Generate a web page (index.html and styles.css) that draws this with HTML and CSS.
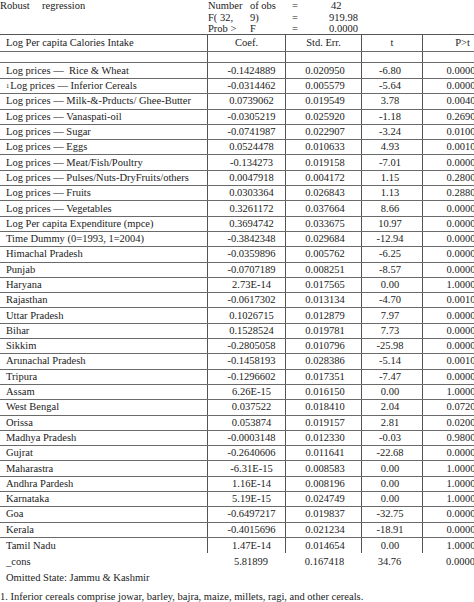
FILE: index.html
```html
<!DOCTYPE html>
<html>
<head>
<meta charset="utf-8">
<link rel="stylesheet" href="styles.css">
</head>
<body>
<div class="page">
  <div class="info">
    <span class="i1">Robust</span><span class="i2">regression</span><span class="i3">Number</span><span class="i4">of obs</span><span class="i5">=</span><span class="i6 n42">42</span>
    <span class="i1"></span><span class="i2"></span><span class="i3">F( 32,</span><span class="i4">9)</span><span class="i5">=</span><span class="i6">919.98</span>
    <span class="i1"></span><span class="i2"></span><span class="i3">Prob &gt;</span><span class="i4">F</span><span class="i5">=</span><span class="i6">0.0000</span>
  </div>
  <div class="table">
    <div class="row head"><div class="c lab">Log Per capita Calories Intake</div><div class="c coef">Coef.</div><div class="c se">Std. Err.</div><div class="c t">t</div><div class="c p">P&gt;t</div></div>
    <div class="row empty"><div class="c lab"></div><div class="c coef"></div><div class="c se"></div><div class="c t"></div><div class="c p"></div></div>
    <div class="row first"><div class="c lab">Log prices —&nbsp; Rice &amp; Wheat</div><div class="c coef">-0.1424889</div><div class="c se">0.020950</div><div class="c t">-6.80</div><div class="c p">0.0000</div></div>
    <div class="row"><div class="c lab"><sup class="fn">1</sup>Log prices — Inferior Cereals</div><div class="c coef">-0.0314462</div><div class="c se">0.005579</div><div class="c t">-5.64</div><div class="c p">0.0000</div></div>
    <div class="row"><div class="c lab">Log prices — Milk-&amp;-Prducts/ Ghee-Butter</div><div class="c coef">0.0739062</div><div class="c se">0.019549</div><div class="c t">3.78</div><div class="c p">0.0040</div></div>
    <div class="row"><div class="c lab">Log prices — Vanaspati-oil</div><div class="c coef">-0.0305219</div><div class="c se">0.025920</div><div class="c t">-1.18</div><div class="c p">0.2690</div></div>
    <div class="row"><div class="c lab">Log prices — Sugar</div><div class="c coef">-0.0741987</div><div class="c se">0.022907</div><div class="c t">-3.24</div><div class="c p">0.0100</div></div>
    <div class="row"><div class="c lab">Log prices — Eggs</div><div class="c coef">0.0524478</div><div class="c se">0.010633</div><div class="c t">4.93</div><div class="c p">0.0010</div></div>
    <div class="row"><div class="c lab">Log prices — Meat/Fish/Poultry</div><div class="c coef">-0.134273</div><div class="c se">0.019158</div><div class="c t">-7.01</div><div class="c p">0.0000</div></div>
    <div class="row"><div class="c lab">Log prices — Pulses/Nuts-DryFruits/others</div><div class="c coef">0.0047918</div><div class="c se">0.004172</div><div class="c t">1.15</div><div class="c p">0.2800</div></div>
    <div class="row"><div class="c lab">Log prices — Fruits</div><div class="c coef">0.0303364</div><div class="c se">0.026843</div><div class="c t">1.13</div><div class="c p">0.2880</div></div>
    <div class="row"><div class="c lab">Log prices — Vegetables</div><div class="c coef">0.3261172</div><div class="c se">0.037664</div><div class="c t">8.66</div><div class="c p">0.0000</div></div>
    <div class="row"><div class="c lab">Log Per capita Expenditure (mpce)</div><div class="c coef">0.3694742</div><div class="c se">0.033675</div><div class="c t">10.97</div><div class="c p">0.0000</div></div>
    <div class="row"><div class="c lab">Time Dummy (0=1993, 1=2004)</div><div class="c coef">-0.3842348</div><div class="c se">0.029684</div><div class="c t">-12.94</div><div class="c p">0.0000</div></div>
    <div class="row"><div class="c lab">Himachal Pradesh</div><div class="c coef">-0.0359896</div><div class="c se">0.005762</div><div class="c t">-6.25</div><div class="c p">0.0000</div></div>
    <div class="row"><div class="c lab">Punjab</div><div class="c coef">-0.0707189</div><div class="c se">0.008251</div><div class="c t">-8.57</div><div class="c p">0.0000</div></div>
    <div class="row"><div class="c lab">Haryana</div><div class="c coef">2.73E-14</div><div class="c se">0.017565</div><div class="c t">0.00</div><div class="c p">1.0000</div></div>
    <div class="row"><div class="c lab">Rajasthan</div><div class="c coef">-0.0617302</div><div class="c se">0.013134</div><div class="c t">-4.70</div><div class="c p">0.0010</div></div>
    <div class="row"><div class="c lab">Uttar Pradesh</div><div class="c coef">0.1026715</div><div class="c se">0.012879</div><div class="c t">7.97</div><div class="c p">0.0000</div></div>
    <div class="row"><div class="c lab">Bihar</div><div class="c coef">0.1528524</div><div class="c se">0.019781</div><div class="c t">7.73</div><div class="c p">0.0000</div></div>
    <div class="row"><div class="c lab">Sikkim</div><div class="c coef">-0.2805058</div><div class="c se">0.010796</div><div class="c t">-25.98</div><div class="c p">0.0000</div></div>
    <div class="row"><div class="c lab">Arunachal Pradesh</div><div class="c coef">-0.1458193</div><div class="c se">0.028386</div><div class="c t">-5.14</div><div class="c p">0.0010</div></div>
    <div class="row"><div class="c lab">Tripura</div><div class="c coef">-0.1296602</div><div class="c se">0.017351</div><div class="c t">-7.47</div><div class="c p">0.0000</div></div>
    <div class="row"><div class="c lab">Assam</div><div class="c coef">6.26E-15</div><div class="c se">0.016150</div><div class="c t">0.00</div><div class="c p">1.0000</div></div>
    <div class="row"><div class="c lab">West Bengal</div><div class="c coef">0.037522</div><div class="c se">0.018410</div><div class="c t">2.04</div><div class="c p">0.0720</div></div>
    <div class="row"><div class="c lab">Orissa</div><div class="c coef">0.053874</div><div class="c se">0.019157</div><div class="c t">2.81</div><div class="c p">0.0200</div></div>
    <div class="row"><div class="c lab">Madhya Pradesh</div><div class="c coef">-0.0003148</div><div class="c se">0.012330</div><div class="c t">-0.03</div><div class="c p">0.9800</div></div>
    <div class="row"><div class="c lab">Gujrat</div><div class="c coef">-0.2640606</div><div class="c se">0.011641</div><div class="c t">-22.68</div><div class="c p">0.0000</div></div>
    <div class="row"><div class="c lab">Maharastra</div><div class="c coef">-6.31E-15</div><div class="c se">0.008583</div><div class="c t">0.00</div><div class="c p">1.0000</div></div>
    <div class="row"><div class="c lab">Andhra Pardesh</div><div class="c coef">1.16E-14</div><div class="c se">0.008196</div><div class="c t">0.00</div><div class="c p">1.0000</div></div>
    <div class="row"><div class="c lab">Karnataka</div><div class="c coef">5.19E-15</div><div class="c se">0.024749</div><div class="c t">0.00</div><div class="c p">1.0000</div></div>
    <div class="row"><div class="c lab">Goa</div><div class="c coef">-0.6497217</div><div class="c se">0.019837</div><div class="c t">-32.75</div><div class="c p">0.0000</div></div>
    <div class="row"><div class="c lab">Kerala</div><div class="c coef">-0.4015696</div><div class="c se">0.021234</div><div class="c t">-18.91</div><div class="c p">0.0000</div></div>
    <div class="row last"><div class="c lab">Tamil Nadu</div><div class="c coef">1.47E-14</div><div class="c se">0.014654</div><div class="c t">0.00</div><div class="c p">1.0000</div></div>
    <div class="row cons"><div class="c lab">_cons</div><div class="c coef">5.81899</div><div class="c se">0.167418</div><div class="c t">34.76</div><div class="c p">0.0000</div></div>
  </div>
  <div class="omitted">Omitted State: Jammu &amp; Kashmir</div>
  <div class="footnote">1. Inferior cereals comprise jowar, barley, bajra, maize, millets, ragi, and other cereals.</div>
</div>
</body>
</html>
```

FILE: styles.css
```css
html, body {
  margin: 0;
  padding: 0;
  background: #fff;
  overflow: hidden;
}
body {
  width: 474px;
  height: 602px;
  font-family: "Liberation Serif", "Times New Roman", serif;
  font-size: 10.5px;
  color: #222;
}
.page {
  width: 500px;
}
.info {
  display: grid;
  grid-template-columns: 42px 166px 42px 42px 37px 60px;
  grid-auto-rows: 11.5px;
  line-height: 11.5px;
  height: 34px;
}
.info span {
  white-space: nowrap;
}
.i6.n42 {
  padding-left: 2px;
}
.table {
  border-top: 1px solid #555;
}
.row {
  display: flex;
  box-sizing: border-box;
  height: 15.3px;
  border-bottom: 1px solid #6a6a6a;
}
.row.head { height: 17px; }
.row.empty { height: 11px; }
.row.first { height: 16px; }
.row.last { border-bottom: none; }
.row.cons { height: 17px; border-bottom: none; }
.c {
  box-sizing: border-box;
  display: flex;
  align-items: center;
  white-space: nowrap;
  line-height: 12px;
}
.lab {
  width: 207px;
  padding-left: 6px;
}
.coef {
  width: 78px;
  justify-content: center;
  padding-left: 10px;
  border-left: 1px solid #555;
}
.se {
  width: 76px;
  justify-content: center;
  padding-left: 3px;
  border-left: 1px solid #555;
}
.t {
  width: 61px;
  justify-content: center;
  padding-right: 4px;
  border-left: 1px solid #555;
}
.p {
  width: 77px;
  justify-content: center;
  border-left: 1px solid #555;
}
.head .coef, .head .se, .head .t { padding-left: 0; padding-right: 0; }
.head .p { padding-left: 3px; }
.cons .c { border-left: none; }
.fn {
  font-size: 6.5px;
  vertical-align: 4px;
  line-height: 0;
  margin-right: 1px;
}
.omitted {
  height: 16px;
  line-height: 16px;
  padding-left: 6px;
}
.footnote {
  margin-top: 4px;
  line-height: 14px;
}
```
